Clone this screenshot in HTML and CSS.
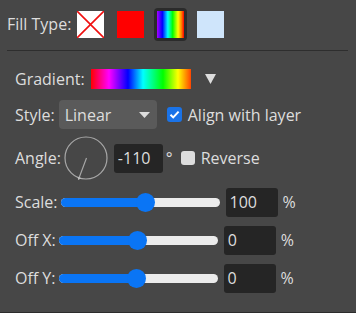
FILE: index.html
```html
<!DOCTYPE html>
<html lang="en">
<head>
    <meta charset="UTF-8">
    <title>Fill settings</title>
    <link rel="stylesheet" href="styles.css">
</head>
<body>
    <div class="panel">
        <div class="fill-row">
            <span class="label">Fill Type:</span>
            <div class="swatches">
                <button class="swatch">
                    <svg class="sw none" width="27" height="27" viewBox="0 0 27 27">
                        <rect width="27" height="27" fill="#fff"/>
                        <path d="M0 0L27 27M27 0L0 27" stroke="#f01010" stroke-width="1.6"/>
                    </svg>
                </button>
                <button class="swatch"><span class="sw solid"></span></button>
                <button class="swatch selected"><span class="sw grad"></span></button>
                <button class="swatch"><span class="sw pattern"></span></button>
            </div>
        </div>
        <div class="sep"></div>

        <div class="body">
            <div class="row gradient-row">
                <span class="label">Gradient:</span>
                <span class="gradient-bar"></span>
                <svg class="gradient-menu" width="11" height="10" viewBox="0 0 11 10">
                    <path d="M0 0H11L5.5 10Z" fill="#ddd"/>
                </svg>
            </div>

            <div class="row style-row">
                <span class="label">Style:</span>
                <div class="select">
                    <span>Linear</span>
                    <svg width="11" height="6" viewBox="0 0 11 6"><path d="M0 0H11L5.5 6Z" fill="#ddd"/></svg>
                </div>
                <label class="check">
                    <span class="box checked">
                        <svg width="15" height="15" viewBox="0 0 15 15"><path d="M3.5 7.8L6.2 10.4L11.6 4.6" fill="none" stroke="#fff" stroke-width="2"/></svg>
                    </span>
                    Align with layer
                </label>
            </div>

            <div class="row angle-row">
                <span class="label">Angle:</span>
                <svg class="dial" width="44" height="44" viewBox="0 0 44 44">
                    <circle cx="22" cy="22" r="21" fill="none" stroke="#a8a8a8" stroke-width="1.2"/>
                    <line x1="22.5" y1="22" x2="15" y2="42" stroke="#a8a8a8" stroke-width="1.2"/>
                    <path d="M13.6 40.4L17.4 42.2L14.2 44Z" fill="#bbb"/>
                </svg>
                <span class="num angle-num">-110</span>
                <span class="unit">°</span>
                <label class="check">
                    <span class="box"></span>
                    Reverse
                </label>
            </div>

            <div class="row slider-row">
                <span class="label">Scale:</span>
                <div class="slider">
                    <span class="fill" style="width: 53%"></span>
                    <span class="thumb" style="left: 53%"></span>
                </div>
                <span class="num">100</span>
                <span class="unit">%</span>
            </div>

            <div class="row slider-row">
                <span class="label">Off X:</span>
                <div class="slider">
                    <span class="fill" style="width: 49%"></span>
                    <span class="thumb" style="left: 49%"></span>
                </div>
                <span class="num">0</span>
                <span class="unit">%</span>
            </div>

            <div class="row slider-row">
                <span class="label">Off Y:</span>
                <div class="slider">
                    <span class="fill" style="width: 49%"></span>
                    <span class="thumb" style="left: 49%"></span>
                </div>
                <span class="num">0</span>
                <span class="unit">%</span>
            </div>
        </div>
    </div>
</body>
</html>
```

FILE: styles.css
```css
body {
    margin: 0;
    background-color: #474747;
    font-family: "Open Sans", "Liberation Sans", Arial, sans-serif;
    font-size: 16px;
    color: #ddd;
}
.panel { height: 312px; border-bottom: 1px solid #2c2c2c; }

/* fill type */
.fill-row { display: flex; align-items: center; height: 48px; padding-left: 7px; }
.swatches { display: flex; gap: 7px; margin-left: 3px; }
.swatch { display: block; padding: 0; margin: 0; border: 3px solid transparent; border-radius: 4px; background: none; }
.swatch.selected { border-color: #2b2b2b; }
.sw { display: block; width: 27px; height: 27px; }
.solid { background: #ff0000; }
.grad { background: linear-gradient(to right, #a0f 0%, #00f 20%, #0ff 40%, #0f0 58%, #ff0 78%, #f80 90%, #f00 100%); }
.pattern { background: #cfe5fb; }
.sep { height: 1px; margin: 2px 8px 0 7px; background: #2e2e2e; }

.body { padding-left: 15px; }
.row { display: flex; align-items: center; }

.gradient-row { height: 30px; margin-top: 13px; }
.gradient-bar {
    width: 100px; height: 20px; margin-left: 6px;
    background: linear-gradient(to right, #f00 0%, #f0f 18%, #00f 37%, #0ff 52%, #0f0 72%, #ff0 87%, #f40 100%);
}
.gradient-menu { margin-left: 14px; }

.style-row { height: 29px; margin-top: 6px; }
.select {
    display: flex; align-items: center; justify-content: space-between;
    box-sizing: border-box; width: 98px; height: 29px; margin-left: 4px;
    padding: 0 7px 0 6px; background: #5a5a5a; border-radius: 4px;
}
.check { display: flex; align-items: center; gap: 6px; margin-left: 10px; }
.box { display: block; width: 14px; height: 14px; border-radius: 3px; background: #ddd; }
.box.checked { width: 15px; height: 15px; background: #1a73e8; }
.box svg { display: block; }

.angle-row { height: 44px; margin-top: 7px; }
.dial { margin-left: 3px; }
.num {
    box-sizing: border-box; height: 29px; line-height: 29px;
    padding-left: 4px; background: #252525; border-radius: 3px;
}
.angle-num { width: 49px; margin-left: 6px; }
.unit { margin-left: 5px; }
.angle-row .unit { margin-left: 3px; }
.angle-row .check { margin-left: 8px; }

.slider-row { height: 30px; margin-top: 7px; }
.slider-row + .slider-row { margin-top: 8px; }
.slider { position: relative; width: 159px; height: 9px; margin-left: 3px; background: #ececec; border-radius: 5px; }
.slider .fill { display: block; height: 9px; background: #0a75f5; border-radius: 5px 0 0 5px; }
.slider .thumb {
    position: absolute; top: -5px; width: 19px; height: 19px; margin-left: -9px;
    background: #0a75f5; border-radius: 50%;
}
.slider-row .num { width: 52px; margin-left: 6px; }
```
